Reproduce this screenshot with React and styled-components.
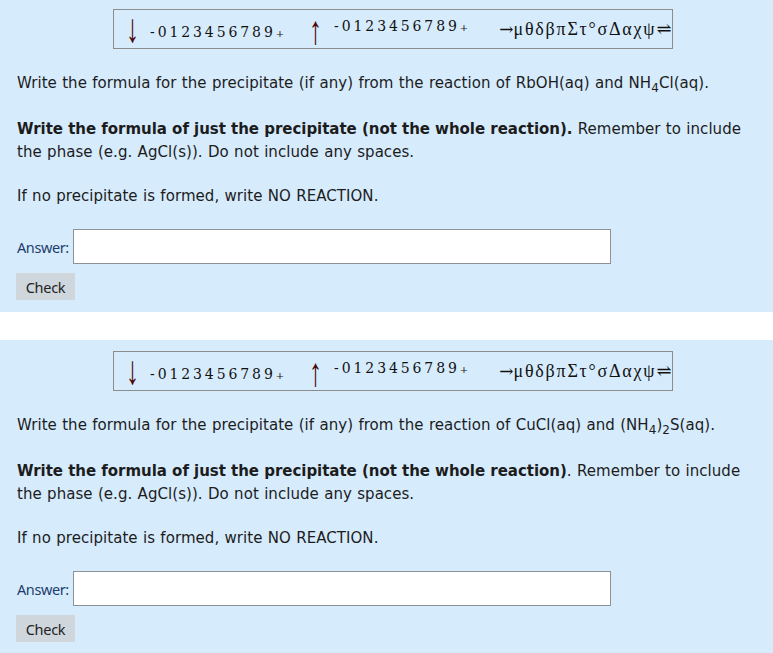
import React from "react";
import styled, { createGlobalStyle } from "styled-components";

const Global = createGlobalStyle`
  html, body { margin: 0; padding: 0; background: #ffffff; }
  body { font-family: "DejaVu Sans", Verdana, sans-serif; }
`;

const Page = styled.div`
  display: flex;
  flex-direction: column;
  gap: 28px;
`;

const Panel = styled.section`
  background: #d6ebfc;
  padding: ${(p) => (p.$first ? "9px" : "11px")} 16px 12px 17px;
  color: #1c1c1c;
`;

const Toolbar = styled.div`
  display: flex;
  align-items: center;
  width: 560px;
  height: 40px;
  box-sizing: border-box;
  margin-left: 96px;
  border: 1px solid #8c8c8c;
  font-family: "Liberation Serif", "DejaVu Serif", serif;
  color: #111;
  padding-left: 12px;
`;

const Arrow = styled.span`
  font-family: "Liberation Serif", serif;
  font-size: 26px;
  color: #4a0505;
  line-height: 1;
  display: inline-block;
  transform: scaleY(1.55);
  position: relative;
  top: ${(p) => (p.$up ? "3px" : "1px")};
`;

const Digits = styled.span`
  font-family: "DejaVu Serif", serif;
  font-size: 14px;
  letter-spacing: 2.9px;
  position: relative;
  top: ${(p) => (p.$sup ? "-3px" : "3px")};
  margin-left: ${(p) => (p.$sup ? "12px" : "11px")};
  margin-right: ${(p) => (p.$sup ? "31px" : "25px")};
`;

const Tiny = styled.span`
  font-size: 10px;
  letter-spacing: 0;
`;

const Greek = styled.span`
  font-size: 18px;
  letter-spacing: 1.8px;
`;

const LongArrow = styled.span`
  font-family: "DejaVu Serif", serif;
  font-size: 17px;
  font-weight: 300;
  letter-spacing: 0;
`;

const Sub = styled.sub`
  font-size: 12px;
  line-height: 0;
  vertical-align: -4px;
`;

const Text = styled.p`
  margin: ${(p) => p.$top || "23px"} 0 0;
  font-size: 15px;
  line-height: 23px;
  word-spacing: 0.5px;
  letter-spacing: 0.05px;
  b {
    word-spacing: 0;
    letter-spacing: -0.03px;
  }
`;

const AnswerRow = styled.div`
  display: flex;
  align-items: center;
  gap: 4px;
  height: 35px;
  margin-top: 21px;
`;

const Label = styled.label`
  font-family: "Noto Sans", "Open Sans", sans-serif;
  font-size: 14.5px;
  letter-spacing: -0.4px;
  color: #1d3d6b;
`;

const Input = styled.input`
  width: 538px;
  height: 35px;
  box-sizing: border-box;
  border: 1px solid #8d9298;
  background: #fff;
  margin: 0;
`;

const Button = styled.button`
  margin-top: 9px;
  width: 59px;
  height: 27px;
  border: none;
  background: #cfd6dc;
  font-family: "Noto Sans", "Open Sans", sans-serif;
  font-size: 14.5px;
  letter-spacing: -0.3px;
  color: #222;
  padding: 0;
  display: block;
  margin-left: -1px;
`;

function Question({ first, children, boldPeriodInside }) {
  return (
    <Panel $first={first}>
      <Toolbar>
        <Arrow>↓</Arrow>
        <Digits>
          -0123456789<Tiny>+</Tiny>
        </Digits>
        <Arrow $up>↑</Arrow>
        <Digits $sup>
          -0123456789<Tiny>+</Tiny>
        </Digits>
        <Greek>
          <LongArrow>→</LongArrow>μθδβπΣτ°σΔαχψ⇌
        </Greek>
      </Toolbar>
      <Text $top="23px">{children}</Text>
      <Text>
        {boldPeriodInside ? (
          <b>Write the formula of just the precipitate (not the whole reaction).</b>
        ) : (
          <>
            <b>Write the formula of just the precipitate (not the whole reaction)</b>.
          </>
        )}{" "}
        Remember to include the phase (e.g. AgCl(s)). Do not include any spaces.
      </Text>
      <Text $top="21px">If no precipitate is formed, write NO REACTION.</Text>
      <AnswerRow>
        <Label>Answer:</Label>
        <Input type="text" />
      </AnswerRow>
      <Button>Check</Button>
    </Panel>
  );
}

export default function App() {
  return (
    <>
      <Global />
      <Page>
        <Question first boldPeriodInside>
          Write the formula for the precipitate (if any) from the reaction of RbOH(aq) and NH<Sub>4</Sub>Cl(aq).
        </Question>
        <Question>
          Write the formula for the precipitate (if any) from the reaction of CuCl(aq) and (NH<Sub>4</Sub>)<Sub>2</Sub>S(aq).
        </Question>
      </Page>
    </>
  );
}
